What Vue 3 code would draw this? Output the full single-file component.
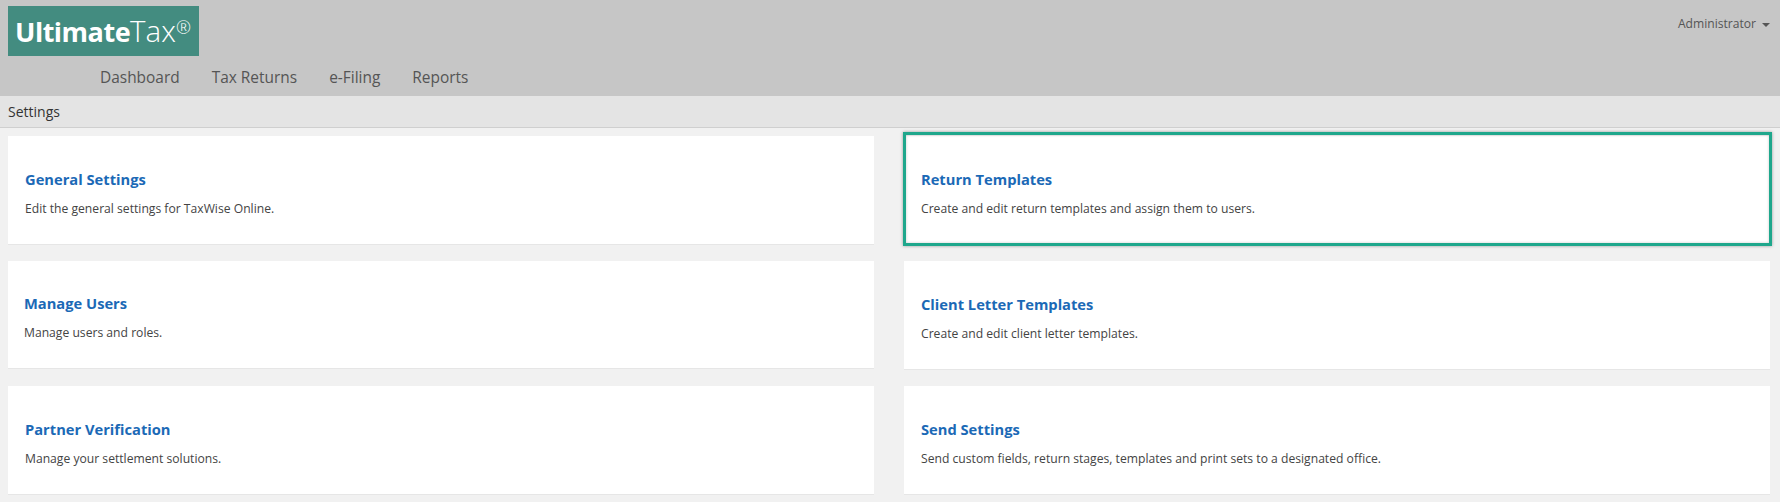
<script setup>
const cards = [
  { title: 'General Settings', text: 'Edit the general settings for TaxWise Online.' },
  { title: 'Return Templates', text: 'Create and edit return templates and assign them to users.', active: true },
  { title: 'Manage Users', text: 'Manage users and roles.', short: true },
  { title: 'Client Letter Templates', text: 'Create and edit client letter templates.' },
  { title: 'Partner Verification', text: 'Manage your settlement solutions.' },
  { title: 'Send Settings', text: 'Send custom fields, return stages, templates and print sets to a designated office.' }
]
const nav = ['Dashboard', 'Tax Returns', 'e-Filing', 'Reports']
</script>

<template>
  <div class="page">
    <header class="top">
      <div class="top-row">
        <div class="logo"><b>Ultimate</b><span>Tax</span><sup>®</sup></div>
        <div class="user">Administrator<i class="caret"></i></div>
      </div>
      <nav class="nav">
        <a v-for="n in nav" :key="n">{{ n }}</a>
      </nav>
    </header>
    <div class="crumb">Settings</div>
    <main class="grid">
      <section
        v-for="c in cards"
        :key="c.title"
        class="card"
        :class="{ active: c.active, short: c.short }"
      >
        <h3>{{ c.title }}</h3>
        <p>{{ c.text }}</p>
      </section>
    </main>
  </div>
</template>

<style>
html, body { margin: 0; background: #f1f1f1; }
</style>

<style scoped>
.page {
  height: 502px;
  overflow: hidden;
  background: #f1f1f1;
  font-family: "Open Sans", "Liberation Sans", sans-serif;
}
.top {
  height: 96px;
  background: #c6c6c6;
  box-sizing: border-box;
  padding: 6px 10px 0 8px;
}
.top-row {
  display: flex;
  justify-content: space-between;
  align-items: flex-start;
}
.logo {
  width: 191px;
  height: 50px;
  box-sizing: border-box;
  padding-left: 7px;
  background: #438c80;
  color: #fff;
  font-size: 27px;
  line-height: 50px;
  white-space: nowrap;
}
.logo b { font-weight: 700; letter-spacing: -0.5px; }
.logo span { font-weight: 300; font-size: 29.5px; }
.logo sup { font-size: 18px; font-weight: 300; line-height: 0; vertical-align: 8px; }
.user {
  display: flex;
  align-items: center;
  gap: 6px;
  margin-top: 9px;
  font-size: 12.1px;
  line-height: 18px;
  color: #555;
}
.caret {
  width: 0;
  height: 0;
  margin-top: 2px;
  border-left: 4px solid transparent;
  border-right: 4px solid transparent;
  border-top: 4px solid #555;
}
.nav {
  display: flex;
  gap: 32px;
  margin-top: 10px;
  padding-left: 92px;
  font-size: 15.45px;
  line-height: 22px;
  color: #555;
}
.crumb {
  height: 32px;
  box-sizing: border-box;
  padding-left: 8px;
  background: #e4e4e4;
  border-bottom: 1px solid #cfcfcf;
  font-size: 14px;
  line-height: 31px;
  color: #333;
}
.grid {
  display: grid;
  grid-template-columns: 866px 866px;
  grid-auto-rows: 109px;
  column-gap: 30px;
  row-gap: 16px;
  padding: 8px 0 0 8px;
}
.card {
  position: relative;
  box-sizing: border-box;
  padding: 32px 17px 0;
  background: #fff;
  border-bottom: 1px solid #e6e6e6;
}
.card.short { height: 108px; padding-left: 16px; padding-top: 31px; }
.card.active::after {
  content: "";
  position: absolute;
  left: -1px;
  top: -4px;
  width: 869px;
  height: 114px;
  box-sizing: border-box;
  border: 3px solid #1fa78c;
  box-shadow: 0 0 3px rgba(0, 0, 0, .35), inset 0 0 3px rgba(0, 0, 0, .2);
}
h3 {
  margin: 0;
  font-size: 14.7px;
  line-height: 22px;
  font-weight: 700;
  color: #1b69b6;
}
p {
  margin: 10px 0 0;
  font-size: 12.15px;
  line-height: 18px;
  color: #444;
}
</style>
